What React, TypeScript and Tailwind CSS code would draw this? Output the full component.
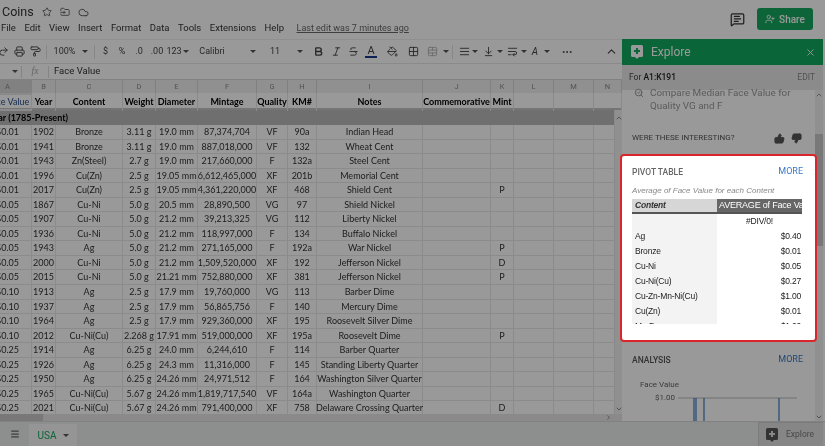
import React from "react";
import { Star, FolderInput, Cloud, Redo2, Printer, PaintRoller, ChevronUp, ChevronDown, ChevronRight, X, Bold, Italic, Strikethrough, PaintBucket, Grid2x2, TableCellsMerge, AlignJustify, ArrowDownToLine, WrapText, MoreHorizontal, MessageSquareText, UserPlus, ThumbsUp, ThumbsDown, SearchCheck, Menu } from "lucide-react";

const cols = "grid grid-cols-[48px_24px_67px_33px_42px_59px_31px_29px_106px_68px_23px_40px_40px_28px]";
const letters = ["A","B","C","D","E","F","G","H","I","J","K","L","M","N"];
const heads = ["Face Value","Year","Content","Weight","Diameter","Mintage","Quality","KM#","Notes","Commemorative","Mint","","",""];
const rows = [
["$0.01","1902","Bronze","3.11 g","19.0 mm","87,374,704","VF","90a","Indian Head",""],
["$0.01","1941","Bronze","3.11 g","19.0 mm","887,018,000","VF","132","Wheat Cent",""],
["$0.01","1943","Zn(Steel)","2.7 g","19.0 mm","217,660,000","F","132a","Steel Cent",""],
["$0.01","1996","Cu(Zn)","2.5 g","19.05 mm","6,612,465,000","XF","201b","Memorial Cent",""],
["$0.01","2017","Cu(Zn)","2.5 g","19.05 mm","4,361,220,000","XF","468","Shield Cent","","P"],
["$0.05","1867","Cu-Ni","5.0 g","20.5 mm","28,890,500","VG","97","Shield Nickel",""],
["$0.05","1907","Cu-Ni","5.0 g","21.2 mm","39,213,325","VG","112","Liberty Nickel",""],
["$0.05","1936","Cu-Ni","5.0 g","21.2 mm","118,997,000","F","134","Buffalo Nickel",""],
["$0.05","1943","Ag","5.0 g","21.2 mm","271,165,000","F","192a","War Nickel","","P"],
["$0.05","2000","Cu-Ni","5.0 g","21.2 mm","1,509,520,000","XF","192","Jefferson Nickel","","D"],
["$0.05","2015","Cu-Ni","5.0 g","21.21 mm","752,880,000","XF","381","Jefferson Nickel","","P"],
["$0.10","1913","Ag","2.5 g","17.9 mm","19,760,000","VG","113","Barber Dime",""],
["$0.10","1937","Ag","2.5 g","17.9 mm","56,865,756","F","140","Mercury Dime",""],
["$0.10","1964","Ag","2.5 g","17.9 mm","929,360,000","XF","195","Roosevelt Silver Dime",""],
["$0.10","2012","Cu-Ni(Cu)","2.268 g","17.91 mm","519,000,000","XF","195a","Roosevelt Dime","","P"],
["$0.25","1914","Ag","6.25 g","24.0 mm","6,244,610","F","114","Barber Quarter",""],
["$0.25","1926","Ag","6.25 g","24.3 mm","11,316,000","F","145","Standing Liberty Quarter",""],
["$0.25","1950","Ag","6.25 g","24.26 mm","24,971,512","F","164","Washington Silver Quarter",""],
["$0.25","1965","Cu-Ni(Cu)","5.67 g","24.26 mm","1,819,717,540","VF","164a","Washington Quarter",""],
["$0.25","2021","Cu-Ni(Cu)","5.67 g","24.26 mm","791,400,000","XF","758","Delaware Crossing Quarter","","D"],
];
const pivot = [["Ag","$0.40"],["Bronze","$0.01"],["Cu-Ni","$0.05"],["Cu-Ni(Cu)","$0.27"],["Cu-Zn-Mn-Ni(Cu)","$1.00"],["Cu(Zn)","$0.01"],["Mn-Br","$1.00"]];

function Caret({ w = "w-[12px]" }: { w?: string }) {
  return <div className={`${w} flex justify-center`}><div className="w-0 h-0 border-l-[3px] border-r-[3px] border-t-[3px] border-l-transparent border-r-transparent border-t-[#555]" /></div>;
}
function Sep() {
  return <div className="w-[7px] flex justify-center"><div className="w-px h-[14px] bg-[#e2e2e2]" /></div>;
}
function Slot({ w, children }: { w: string; children: React.ReactNode }) {
  return <div className={`${w} flex justify-center items-center text-[#444] text-[9px] whitespace-nowrap`}>{children}</div>;
}
function ExploreIcon({ c, plus }: { c: string; plus: string }) {
  return (
    <svg width="12" height="14" viewBox="0 0 12 14" className="shrink-0">
      <path d="M1.5 0h9A1.5 1.5 0 0 1 12 1.5v9a1.5 1.5 0 0 1-1.5 1.5H8l-2 2-2-2H1.5A1.5 1.5 0 0 1 0 10.500v-9A1.500 1.500 0 0 1 1.500 0z" fill={c} />
      <path d="M5 3h2v2h2v2H7v2H5V7H3V5h2z" fill={plus} />
    </svg>
  );
}

export default function App() {
  return (
    <div className="relative w-[825px] h-[446px] overflow-hidden bg-white flex flex-col font-['Roboto',sans-serif] blur-[0.6px]">
      {/* Title bar */}
      <div className="h-[20px] shrink-0 flex">
        <div className="flex items-center pl-[2px] pt-[4px] text-[#333]">
          <span className="w-[37px] text-[12.500px] leading-none">Coins</span>
          <Star size={10} className="ml-[3px] text-[#555]" />
          <FolderInput size={10} className="ml-[8px] text-[#555]" />
          <Cloud size={11} className="ml-[8px] text-[#555]" />
        </div>
        <div className="flex-1" />
      </div>
      {/* Menu row */}
      <div className="h-[19px] shrink-0 relative">
        <div className="flex items-center gap-[8.500px] h-[17px] pl-px text-[9.500px] text-[#333]">
          {["File","Edit","View","Insert","Format","Data","Tools","Extensions","Help"].map((m) => <span key={m}>{m}</span>)}
          <span className="ml-[4px] underline text-[#666] text-[9px]">Last edit was 7 minutes ago</span>
        </div>
      </div>
      {/* Top-right actions */}
      <div className="absolute top-[8px] right-[12px] flex items-center gap-[12px]">
        <MessageSquareText size={15} className="text-[#333]" />
        <div className="w-[56px] h-[22px] rounded-[3px] bg-[#18a760] flex items-center justify-center gap-[4px] text-white text-[10px] font-medium">
          <UserPlus size={10} />
          <span>Share</span>
        </div>
      </div>

      <div className="flex flex-1 min-h-0">
        {/* Sheet */}
        <div className="w-[622px] shrink-0 flex flex-col overflow-hidden">
          {/* Toolbar */}
          <div className="h-[24px] shrink-0 flex items-center -ml-[5px] border-t border-[#eeeeee]">
            <Slot w="w-[16px]"><Redo2 size={11} /></Slot>
            <Slot w="w-[16px]"><Printer size={11} /></Slot>
            <Slot w="w-[16px]"><PaintRoller size={11} /></Slot>
            <Sep />
            <Slot w="w-[29px]">100%</Slot>
            <Caret />
            <Sep />
            <Slot w="w-[15px]">$</Slot>
            <Slot w="w-[18px]">%</Slot>
            <Slot w="w-[16px]">.0</Slot>
            <Slot w="w-[20px]">.00</Slot>
            <Slot w="w-[14px]">123</Slot>
            <Caret w="w-[10px]" />
            <Slot w="w-[42px]">Calibri</Slot>
            <Slot w="w-[14px]"> </Slot>
            <Caret />
            <Slot w="w-[32px]">11</Slot>
            <Caret w="w-[18px]" />
            <Slot w="w-[18px]"><Bold size={11} strokeWidth={3} /></Slot>
            <Slot w="w-[18px]"><Italic size={11} /></Slot>
            <Slot w="w-[17px]"><Strikethrough size={11} /></Slot>
            <Slot w="w-[18px]"><span className="border-b-2 border-[#1a3a8f] text-[11px] leading-[11px] px-[2px]">A</span></Slot>
            <Slot w="w-[25px]"><PaintBucket size={11} /></Slot>
            <Slot w="w-[16px]"><Grid2x2 size={11} /></Slot>
            <Slot w="w-[22px]"><TableCellsMerge size={11} className="opacity-40" /></Slot>
            <Caret w="w-[6px]" />
            <Sep />
            <Slot w="w-[16px]"><AlignJustify size={11} /></Slot>
            <Caret w="w-[6px]" />
            <Slot w="w-[20px]"><ArrowDownToLine size={11} /></Slot>
            <Caret w="w-[4px]" />
            <Slot w="w-[20px]"><WrapText size={11} /></Slot>
            <Caret w="w-[3px]" />
            <Slot w="w-[20px]"><span className="italic text-[10px]">A</span></Slot>
            <Caret w="w-[4px]" />
            <Slot w="w-[36px]"><MoreHorizontal size={12} /></Slot>
            <div className="w-[18px]" />
            <Slot w="w-[16px]"><ChevronUp size={13} /></Slot>
          </div>
          {/* Formula bar */}
          <div className="h-[16px] shrink-0 flex items-center border-t border-[#e6e6e6] text-[9.500px] text-[#333]">
            <div className="w-[21px] flex justify-end pr-[3px]"><Caret w="w-[6px]" /></div>
            <div className="w-px h-[12px] bg-[#dadce0]" />
            <span className="w-[26px] text-center italic text-[#aaa] font-['Liberation_Serif',serif]">fx</span>
            <div className="w-px h-[12px] bg-[#dadce0]" />
            <span className="ml-[5px]">Face Value</span>
          </div>
          {/* Column letters */}
          <div className={`${cols} -ml-[16px] w-[638px] h-[14px] shrink-0 bg-[#f1f1f1] border-t border-[#d8d8d8]`}>
            {letters.map((l, i) => (
              <div key={l} className={`flex items-center justify-center text-[7.500px] text-[#888] border-r border-[#d5d5d5] ${i === 0 ? "bg-[#d8d8d8]" : ""}`}>{l}</div>
            ))}
          </div>
          {/* Header row */}
          <div className={`${cols} -ml-[16px] w-[638px] h-[17px] shrink-0 border-b-[2px] border-[#c4c4c4] font-['Lato',sans-serif] text-[9px] font-bold text-black`}>
            {heads.map((h, i) => (
              <div key={i} className={`relative flex items-center justify-center whitespace-nowrap border-r border-[#e6e6e6] ${i === 0 ? "text-[#274f8a] font-normal border-2 border-[#2f6bd0]" : ""}`}>{h}</div>
            ))}
          </div>
          {/* Data */}
          <div className="flex flex-1 min-h-0">
            <div className="w-[614px] shrink-0 overflow-hidden">
              <div className="-ml-[16px] w-[630px] font-['Lato',sans-serif] text-[9px] text-[#333]">
                <div className="h-[15px] bg-[#b9b9b9] font-bold text-black flex items-center">
                  <div className="w-[84px] flex justify-end whitespace-nowrap">Dollar (1785-Present)</div>
                </div>
                {rows.map((r, i) => (
                  <div key={i} className={`${cols} h-[14.550px] border-b border-[#e8e8e8]`}>
                    {letters.map((_, j) => (
                      <div key={j} className="flex items-center justify-center whitespace-nowrap border-r border-[#e8e8e8]">{r[j] ?? ""}</div>
                    ))}
                  </div>
                ))}
              </div>
            </div>
            <div className="flex-1 flex flex-col items-center bg-[#f0f0f0] border-l border-[#e4e4e4]">
              <ChevronUp size={8} className="text-[#555] mt-[4px]" />
              <div className="flex-1" />
              <ChevronDown size={8} className="text-[#555] mb-[1px]" />
            </div>
          </div>
          {/* Horizontal scrollbar */}
          <div className="h-[7px] shrink-0 bg-[#e6e6e6] flex justify-between items-center">
            <div className="w-[43px] h-full bg-[#c8c8c8]" />
            <ChevronRight size={7} className="text-[#555] mr-[10px]" />
          </div>
        </div>

        {/* Explore panel */}
        <div className="w-[201px] shrink-0 flex flex-col">
          <div className="h-[26px] shrink-0 bg-[#12ab5e] flex items-center pl-[9px] pr-[7px]">
            <ExploreIcon c="#ffffff" plus="#12ab5e" />
            <span className="ml-[8px] text-[12px] text-white">Explore</span>
            <div className="flex-1" />
            <X size={11} className="text-white" />
          </div>
          <div className="h-[25px] shrink-0 bg-[#e8e8e8] flex items-center justify-between pl-[7px] pr-[8px] text-[8.500px] text-[#444]">
            <span>For <span className="font-medium text-[#222]">A1:K191</span></span>
            <span className="text-[#888]">EDIT</span>
          </div>
          <div className="flex flex-1 min-h-0">
            <div className="w-[193px] shrink-0 flex flex-col">
              <div className="h-[31px] shrink-0 -mt-[3px] flex pl-[12px] text-[9.900px] leading-[12.500px] text-[#999] overflow-hidden">
                <SearchCheck size={10} className="mt-[1px] shrink-0 text-[#888]" />
                <span className="ml-[6px] w-[150px]">Compare Median Face Value for Quality VG and F</span>
              </div>
              <div className="h-[36px] shrink-0 pt-[4px] flex items-center justify-between pl-[10px] pr-[13px] text-[8px] text-[#555]">
                <span>WERE THESE INTERESTING?</span>
                <span className="flex gap-[6px]">
                  <ThumbsUp size={11} className="text-[#555] fill-[#555]" />
                  <ThumbsDown size={11} className="text-[#555] fill-[#555]" />
                </span>
              </div>
              {/* Highlighted card */}
              <div className="relative z-10 -ml-[2px] w-[197px] h-[188px] shrink-0 bg-white border-2 border-[#d9262c] rounded-[4px] pt-[9px] px-[10px]">
                <div className="flex justify-between items-center h-[14px] pr-[2px] text-[8.500px]">
                  <span className="font-medium text-[#666]">PIVOT TABLE</span>
                  <span className="text-[#3b78c4] text-[9px]">MORE</span>
                </div>
                <div className="mt-[5px] h-[14px] flex items-center italic text-[8px] text-[#888] whitespace-nowrap font-['Liberation_Sans',sans-serif]">Average of Face Value for each Content</div>
                <div className="mt-[1px] w-[170px] h-[125px] overflow-hidden font-['Liberation_Sans',sans-serif] text-[8.500px] tracking-[-0.2px] text-[#222]">
                  <div className="flex h-[15px] border-b-2 border-[#555]">
                    <div className="w-[85px] bg-[#d6d6d6] flex items-center pl-[3px] italic font-bold text-[8.500px] text-[#333]">Content</div>
                    <div className="flex-1 bg-[#666666] text-white flex items-center pl-[2px] whitespace-nowrap overflow-hidden text-[9px]">AVERAGE of Face Value</div>
                  </div>
                  <div className="flex h-[14.500px]">
                    <div className="w-[85px] bg-[#f3f3f3]" />
                    <div className="flex-1 flex items-center justify-center">#DIV/0!</div>
                  </div>
                  {pivot.map(([a, b]) => (
                    <div key={a} className="flex h-[15px]">
                      <div className="w-[85px] bg-[#f3f3f3] flex items-center pl-[3px] whitespace-nowrap">{a}</div>
                      <div className="flex-1 flex items-center justify-end pr-[1px]">{b}</div>
                    </div>
                  ))}
                </div>
              </div>
              {/* Analysis */}
              <div className="flex-1 min-h-0 overflow-hidden pl-[10px] pr-[12px]">
                <div className="mt-[12px] flex justify-between items-center h-[12px] text-[8.500px]">
                  <span className="font-medium text-[#555]">ANALYSIS</span>
                  <span className="text-[#3b78c4] text-[9px]">MORE</span>
                </div>
                <div className="mt-[14px] pl-[8px] text-[8px] leading-[10px] text-[#666]">Face Value</div>
                <div className="flex items-start mt-[3px] pl-[23px] text-[8px] text-[#666]">
                  <span className="leading-[10px]">$1.00</span>
                  <svg width="120" height="30" viewBox="0 0 120 30" className="ml-[3px] mt-[4px] shrink-0">
                    <path d="M0 1H119" stroke="#bbbbbb" strokeWidth="1" />
                    <path d="M16 1V30M18 1V30M26 1V30M101 1V30" stroke="#3b78c4" strokeWidth="1.200" />
                  </svg>
                </div>
              </div>
            </div>
            <div className="flex-1 bg-[#f1f1f1] flex flex-col items-center relative">
              <ChevronUp size={8} className="text-[#666] mt-[1px]" />
              <div className="mt-[35px] w-full h-[112px] bg-[#c9c9c9]" />
              <div className="flex-1" />
              <ChevronDown size={8} className="text-[#555]" />
            </div>
          </div>
        </div>
        <div className="flex-1" />
      </div>

      {/* Sheet bar */}
      <div className="h-[25px] shrink-0 bg-[#eceeee] border-t-[1px] border-[#d8d8d8] flex">
        <div className="w-[29px] flex items-center justify-center"><Menu size={10} strokeWidth={3} className="text-[#666]" /></div>
        <div className="mt-[2px] w-[48px] bg-[#f8f8f8] flex items-center justify-center gap-[7px] text-[10px] text-[#18a760]">
          <span>USA</span>
          <Caret w="w-[5px]" />
        </div>
        <div className="flex-1" />
        <div className="w-[65px] bg-[#e0e0e0] border-l border-t border-[#cfcfcf] flex items-center gap-[8px] pl-[7px] text-[8.500px] text-[#777]">
          <ExploreIcon c="#555555" plus="#e0e0e0" />
          <span>Explore</span>
        </div>
        <div className="w-[2px]" />
      </div>

      {/* Dim layer */}
      <div className="absolute inset-0 z-[5] bg-black/40" />
    </div>
  );
}
